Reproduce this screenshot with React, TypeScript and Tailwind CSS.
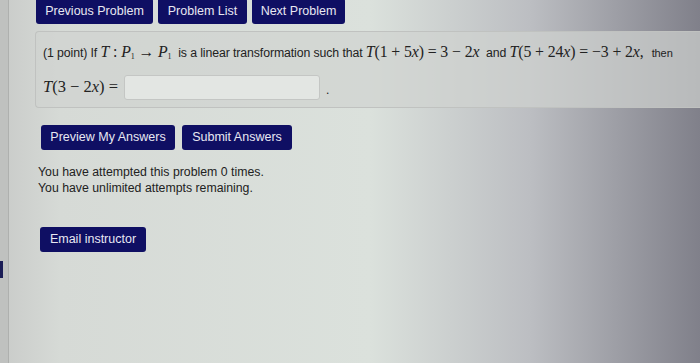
import React from "react";

const NAV = [
  { label: "Previous Problem", w: "w-[117px]" },
  { label: "Problem List", w: "w-[89px]" },
  { label: "Next Problem", w: "w-[93px]" },
];

function Btn({ label, className = "" }: { label: string; className?: string }) {
  return (
    <div
      className={`flex items-center justify-center rounded-[3px] bg-[#0f0f63] text-[12.5px] text-[#e8e8f2] ${className}`}
    >
      {label}
    </div>
  );
}

function M({ children, size = "text-[15.8px]" }: { children: React.ReactNode; size?: string }) {
  return (
    <span className={`font-['Liberation_Serif',serif] text-[#222] ${size}`}>
      {children}
    </span>
  );
}

function I({ children }: { children: React.ReactNode }) {
  return <i>{children}</i>;
}

function P1() {
  return (
    <span>
      <I>P</I>
      <sub className="text-[8px] not-italic">1</sub>
    </span>
  );
}

export default function App() {
  return (
    <div className="relative flex h-[363px] w-[700px] overflow-hidden bg-[linear-gradient(to_right,#c9cbc9_0px,#d6dad6_60px,#dbe1dc_370px,#bcbec2_530px,#80808a_700px)] font-['Liberation_Sans',sans-serif] text-[#222]">
      {/* screen edge */}
      <div className="w-[9px] shrink-0 border-r border-[#aeb0ae] bg-[#bfc1bf]" />
      <div className="absolute left-0 top-[261px] h-[17px] w-[3px] bg-[#1a1c55]" />

      <div className="flex flex-1 flex-col pl-[26px]">
        {/* top nav */}
        <div className="flex gap-[5px] pl-[1px]">
          {NAV.map((n) => (
            <Btn key={n.label} label={n.label} className={`-mt-[2px] h-[26px] pt-[1px] ${n.w}`} />
          ))}
        </div>

        {/* problem box */}
        <div className="mt-[7px] flex h-[77px] flex-col rounded-l-[4px] border border-r-0 border-[#c0c2c0] bg-[#d0d3d0]/70 pl-[7px] pt-[8px]">
          <div className="flex items-baseline whitespace-nowrap text-[12.3px] tracking-[-0.1px]">
            <span>(1 point) If&nbsp;</span>
            <M>
              <I>T</I> : <P1 /> → <P1 />
            </M>
            <span>&nbsp;&nbsp;is a linear transformation such that&nbsp;</span>
            <M>
              <I>T</I>(1 + 5<I>x</I>) = 3 − 2<I>x</I>
            </M>
            <span>&nbsp;&nbsp;and&nbsp;</span>
            <M>
              <I>T</I>(5 + 24<I>x</I>) = −3 + 2<I>x</I>,
            </M>
            <span className="ml-[8px] text-[11px]">then</span>
          </div>
          <div className="mt-[11px] flex items-center">
            <M size="text-[16.5px]">
              <I>T</I>(3 − 2<I>x</I>) =
            </M>
            <div className="ml-[6px] h-[25px] w-[196px] rounded-[3px] border border-[#c4c6c4] bg-[#e3e6e3]" />
            <span className="ml-[6px] mt-[6px] text-[12px]">.</span>
          </div>
        </div>

        {/* answer buttons */}
        <div className="mt-[17px] flex gap-[7px] pl-[6px]">
          <Btn label="Preview My Answers" className="h-[25px] w-[134px]" />
          <Btn label="Submit Answers" className="h-[25px] w-[110px]" />
        </div>

        <div className="mt-[14px] pl-[3px] text-[12.3px] leading-[16px]">
          <div>You have attempted this problem 0 times.</div>
          <div>You have unlimited attempts remaining.</div>
        </div>

        <div className="mt-[31px] flex pl-[5px]">
          <Btn label="Email instructor" className="h-[25px] w-[106px]" />
        </div>
      </div>
    </div>
  );
}
